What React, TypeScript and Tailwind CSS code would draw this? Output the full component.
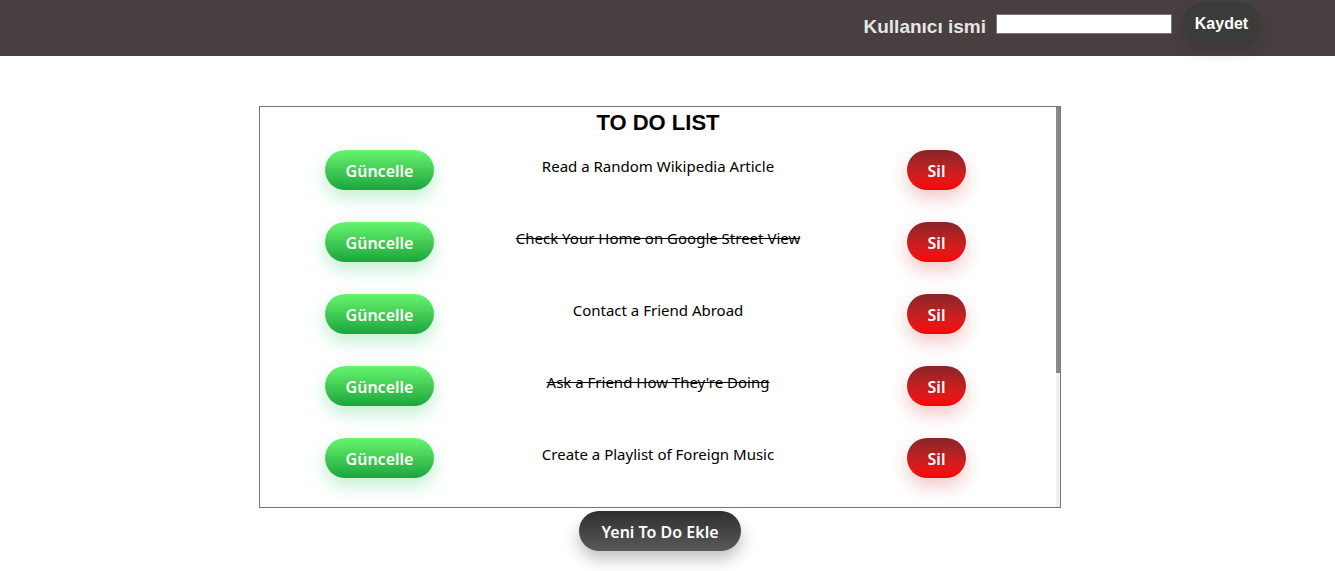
import React, { useState } from 'react';

type Todo = { id: number; text: string; done: boolean };

const INITIAL_TODOS: Todo[] = [
  { id: 1, text: 'Read a Random Wikipedia Article', done: false },
  { id: 2, text: 'Check Your Home on Google Street View', done: true },
  { id: 3, text: 'Contact a Friend Abroad', done: false },
  { id: 4, text: "Ask a Friend How They're Doing", done: true },
  { id: 5, text: 'Create a Playlist of Foreign Music', done: false },
];

const comic = { fontFamily: '"Comic Sans MS", "Liberation Sans", sans-serif' };

const App: React.FC = () => {
  const [todos, setTodos] = useState<Todo[]>(INITIAL_TODOS);
  const [userName, setUserName] = useState('');

  const toggleTodo = (id: number) =>
    setTodos(todos.map(t => (t.id === id ? { ...t, done: !t.done } : t)));

  const removeTodo = (id: number) => setTodos(todos.filter(t => t.id !== id));

  return (
    <div className="min-h-[571px] bg-white font-['Noto_Sans',sans-serif]">
      {/* Header */}
      <header className="h-14 bg-[#483f40] flex items-center justify-end pr-[75px]">
        <span className="text-[19px] font-bold text-[#e6e6e6] mr-[10px] -mt-[2px]" style={comic}>
          Kullanıcı ismi
        </span>
        <input
          type="text"
          value={userName}
          onChange={e => setUserName(e.target.value)}
          className="w-[176px] h-[20px] bg-white border border-[#777] outline-none px-1 text-sm -mt-[8px]"
        />
        <button
          className="ml-[11px] h-[42px] w-[77px] rounded-full bg-[#3b3b3b] text-white font-bold text-[16px] pt-[1px] shadow-[0_8px_16px_rgba(0,0,0,0.15)] -mt-[10px]"
          style={comic}
        >
          Kaydet
        </button>
      </header>

      {/* List */}
      <div className="ml-[259px] mt-[50px] w-[802px] h-[402px] border border-[#777] flex">
        <div className="flex-1">
          <h1 className="text-center text-[22px] font-bold text-black leading-[30px] mt-[1px] mb-[12px]" style={comic}>
            TO DO LIST
          </h1>
          {todos.map(todo => (
            <div key={todo.id} className="grid grid-cols-[200px_1fr_200px] items-start mb-[32px]">
              <div>
                <button
                  onClick={() => toggleTodo(todo.id)}
                  className="ml-[65px] w-[109px] h-[40px] pt-[2px] rounded-full bg-gradient-to-b from-[#66f56f] to-[#16a63c] text-white font-semibold text-[16px] shadow-[0_8px_18px_rgba(34,197,94,0.28)]"
                >
                  Güncelle
                </button>
              </div>
              <p
                className={`text-center text-[15px] text-black pt-[6px] leading-[20px] ${
                  todo.done ? 'line-through' : ''
                }`}
              >
                {todo.text}
              </p>
              <div>
                <button
                  onClick={() => removeTodo(todo.id)}
                  className="ml-[51px] w-[59px] h-[40px] pt-[2px] rounded-full bg-gradient-to-b from-[#8a2428] to-[#ff0000] text-white font-semibold text-[16px] shadow-[0_8px_18px_rgba(200,30,30,0.25)]"
                >
                  Sil
                </button>
              </div>
            </div>
          ))}
        </div>
        {/* scrollbar */}
        <div className="w-[4px] bg-[#f1f1f1]">
          <div className="h-[266px] bg-[#888]" />
        </div>
      </div>

      <div className="ml-[259px] w-[802px] flex justify-center mt-[3px]">
        <button className="w-[162px] h-[40px] pt-[2px] rounded-full bg-gradient-to-b from-[#2f2f2f] to-[#5a5a5a] text-white font-semibold text-[16px] shadow-[0_8px_16px_rgba(0,0,0,0.25)]">
          Yeni To Do Ekle
        </button>
      </div>
    </div>
  );
};

export default App;
